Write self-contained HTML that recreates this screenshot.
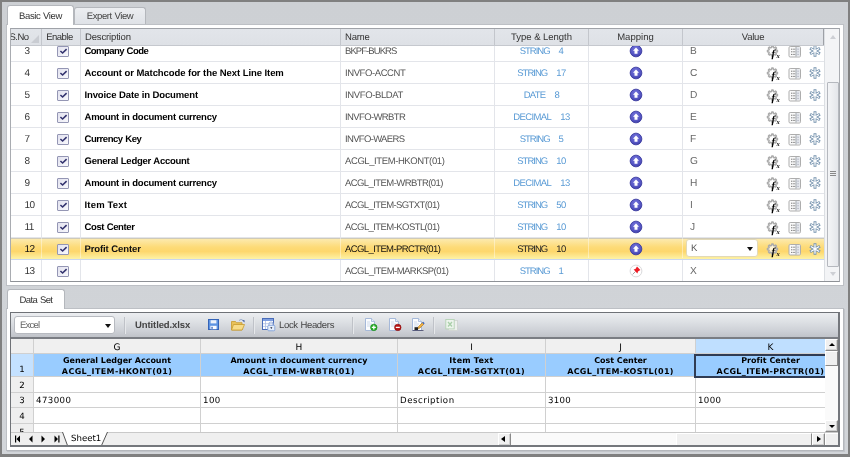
<!DOCTYPE html><html><head><meta charset="utf-8"><title>Mapper</title><style>*{box-sizing:border-box;margin:0;padding:0}
html,body{width:850px;height:457px;overflow:hidden}
body{background:#808080;font-family:"Liberation Sans",sans-serif;font-size:9.5px;color:#222;text-rendering:geometricPrecision}
#frame{position:absolute;left:0;top:0;width:850px;height:457px;border:2px solid #808080;border-bottom-width:3px;background:linear-gradient(#cdd0d4,#d2d5d9);overflow:hidden;will-change:transform}
.tab{position:absolute;border:1px solid #b4b7bc;border-bottom:none;border-radius:3px 3px 0 0;background:linear-gradient(#eceef1,#dfe2e7);color:#444;text-align:center;white-space:nowrap}
.tab.active{background:#fff;color:#333;z-index:3}
#tab-basic{left:5px;top:3px;width:67px;height:20px;line-height:21px;}
#tab-expert{left:72px;top:5px;width:72px;height:17px;line-height:17px;}
#tab-ds{left:5px;top:287px;width:58px;height:20px;line-height:22px}
.panel{position:absolute;background:#fff;border:1px solid #bdc0c5}
#panel-top{left:4px;top:22px;width:838px;height:262px}
#panel-bot{left:4px;top:306px;width:838px;height:143px;background:#fff;border-right-color:#b4b7bc;border-bottom-color:#b4b7bc;box-shadow:1px 1px 0 #c2c5ca}
.grid{position:absolute;left:3px;top:3px;width:830px;height:254px;border:1px solid #a9acb1;border-top-color:#9fa2a8;border-bottom-color:#8e9196;background:#fff;overflow:hidden}
.ghead{position:absolute;left:0;top:0;width:813px;height:17px;background:linear-gradient(#e2e5ea,#dee1e6);border-bottom:1px solid #c5c8ce;z-index:2}
.gh{position:absolute;top:0;height:16px;line-height:18.4px;border-right:1px solid #c3c6cc;color:#333;white-space:nowrap;overflow:hidden}
.gbody{position:absolute;left:0;top:17px;width:813px;height:236px;overflow:hidden}
.grow{position:absolute;left:0;width:813px;height:22px;border-bottom:1px solid #e3e5ea}
.gc{position:absolute;top:0;height:21px;line-height:23.6px;border-right:1px solid #e3e5ea;white-space:nowrap;overflow:hidden}
.c-sno{left:0;width:31px;text-align:left;padding-left:13.5px}
.c-en{left:31px;width:39px;text-align:center}
.c-desc{left:70px;width:260px;padding-left:3.5px}
.c-name{left:330px;width:154px;padding-left:4px}
.c-type{left:484px;width:94px;text-align:center}
.c-map{left:578px;width:94px;text-align:center}
.c-val{left:672px;width:141px}
.gh.c-sno{text-align:left;padding-left:0;text-indent:-1.5px}
.gh.c-en{text-indent:-3px}
.gh.c-val{text-align:center;border-right:1px solid #9da0a6;width:141px}
.gh.c-desc,.gh.c-name{padding-left:4px}
.gc.c-sno{color:#363636;font-size:10px}
.gc.c-desc{font-weight:bold;color:#000}
.gc.c-name{color:#555}
.gc.c-type{color:#5a9bd5}
.gc.c-type .ln{margin-left:9px}
.gc.c-val{color:#666;border-right:none}
.vt{position:absolute;left:7px;top:0;font-size:10.2px;color:#6a6a6a}
.sorttri{position:absolute;left:20px;top:6px;width:0;height:0;border-left:8px solid transparent;border-bottom:8px solid #c9ccd2}
.cb{display:inline-block;position:relative;top:3px;left:1.5px;width:12px;height:11px;border:1px solid #9496b4;background:linear-gradient(135deg,#e2e2ef,#f8f8fc);border-radius:1px}
.cb svg{position:absolute;left:1px;top:0}
.c-map svg{position:relative;top:4px}
.ic{position:absolute}
.i1{left:83px;top:4px}
.i2{left:105px;top:4.5px}
.i3{left:125px;top:4px}
.grow.sel{background:linear-gradient(#fceaae 0%,#fddb78 40%,#fdd76c 62%,#fdf2a6 100%);border-top:1px solid #cfcab8;border-bottom:1px solid #c9d6ee}
.grow.sel .gc{border-right-color:rgba(255,255,255,0.4);color:#111;height:20px;top:-1px}
.grow.sel .gc.c-type{color:#222}
.combo{position:absolute;left:3px;top:1px;width:72px;height:18px;background:#fff;border:1px solid #e2d9b8;border-radius:3px;line-height:17px}
.combo .ct{position:absolute;left:4px;top:0;color:#555}
.dd{position:absolute;width:0;height:0;border-left:3px solid transparent;border-right:3px solid transparent;border-top:4px solid #111}
.combo .dd{right:4px;top:7px}
.vscroll{position:absolute;left:813px;top:0;width:15px;height:252px;z-index:3;background:#f3f4f6;border-left:1px solid #dcdfe3}
.vscroll .thumb{position:absolute;left:2px;top:53px;width:12px;height:185px;border:1px solid #b5b8be;background:linear-gradient(90deg,#f4f5f7,#e4e6ea);border-radius:1px}
.vscroll .grip{position:absolute;left:2px;top:88px;width:6px;height:5px;border-top:1px solid #888;border-bottom:1px solid #888}
.vscroll .grip:after{content:"";position:absolute;left:0;top:1px;width:6px;height:1px;background:#888}
.arr{position:absolute;left:4.5px;width:0;height:0;border-left:3.5px solid transparent;border-right:3.5px solid transparent}
.arr.up{top:6px;border-bottom:4px solid #cdcfd4}
.arr.down{top:243px;border-top:4px solid #cdcfd4}
#inner{position:absolute;left:3px;top:3px;width:830px;height:135px;border:1px solid #6f7277;border-right:2px solid #74777c;border-bottom:2px solid #74777c;background:#fff}
#toolbar{position:absolute;left:0;top:0;width:827px;height:26px;background:linear-gradient(#eceef1,#dcdfe3 40%,#cdd0d6 75%,#c0c3c9);border-bottom:2px solid #7a7d83;color:#444}
#xlcombo{position:absolute;left:3px;top:3px;width:101px;height:18px;border:1px solid #b7bac0;border-radius:3px;background:#fff;line-height:17px;padding-left:5px;color:#666}
#xlcombo .dd{right:3px;top:7px}
.sep{position:absolute;top:4px;width:2px;height:17px;border-left:1px solid #bfc2c8;border-right:1px solid #e6e8eb}
#fname{position:absolute;left:124px;top:0;line-height:26px;font-weight:bold;color:#444}
#lockh{position:absolute;left:268px;top:0;line-height:26px;color:#444}
.tb{position:absolute}
#sheet{position:absolute;left:0;top:26px;width:827px;height:106px;background:#fff;font-family:"DejaVu Sans","Liberation Sans",sans-serif;font-size:8px;color:#000;overflow:hidden}
#sheetin{position:absolute;left:0;top:0;width:814px;height:93px;overflow:hidden;background:#d0d0d0}
.corner{position:absolute;left:0;top:0;width:22px;height:14px;background:#efefef}
.colh{position:absolute;top:0;height:14px;line-height:18.4px;background:#f0f0f0;text-align:center;font-size:9px;overflow:hidden}
.colh.selc{background:#bfdfff}
.hcell{position:absolute;top:15px;height:22px;padding-top:1px;background:#99ccff;text-align:center;font-weight:bold;line-height:11px;font-size:8px;white-space:nowrap;overflow:hidden}
.cell{position:absolute;background:#fff;line-height:17px;padding-left:2px;font-size:8.6px;white-space:nowrap}
.rowh{position:absolute;left:0;width:22px;background:#efefef;text-align:center;font-size:8.6px}
.rowh span{position:absolute;left:0;right:0;bottom:0;line-height:12px}
.rowh.r1{background:#c4e1ff}
#selbox{position:absolute;left:683px;top:15px;width:133px;height:24px;border:2px solid #303c54;border-right:none}
#svs{position:absolute;left:814px;top:0;width:13px;height:93px;background:#fafafa}
.sb{position:absolute;background:#f0f0f0;border:1px solid #fff;border-right-color:#8a8a8a;border-bottom-color:#8a8a8a;box-shadow:inset -1px -1px 0 #d0d0d0}
#svs .up{left:0;top:0;width:13px;height:12px}
#svs .sthumb{position:absolute;left:0;top:12px;width:13px;height:15px;background:#f0f0f0;border:1px solid #fff;border-right-color:#8a8a8a;border-bottom-color:#8a8a8a}
#svs .down{left:0;top:81px;width:13px;height:12px}
.sb:after{content:"";position:absolute;width:0;height:0}
.sb.up:after{left:3px;top:3px;border-left:3px solid transparent;border-right:3px solid transparent;border-bottom:3px solid #000}
.sb.down:after{left:3px;top:4px;border-left:3px solid transparent;border-right:3px solid transparent;border-top:3px solid #000}
.sb.left:after{left:2px;top:2px;border-top:3.5px solid transparent;border-bottom:3.5px solid transparent;border-right:4px solid #000}
.sb.right:after{left:4px;top:2px;border-top:3.5px solid transparent;border-bottom:3.5px solid transparent;border-left:4px solid #000}
#sbar{position:absolute;left:0;top:93px;width:827px;height:13px;background:#efefef;border-top:1px solid #c9c9c9}
.nav{position:absolute;left:4px;top:2px}
.stab{position:absolute;left:51px;top:-1px;width:50px;height:14px}
.stab svg{position:absolute;left:0;top:0}
.stab b{position:absolute;left:9px;top:1px;font-weight:normal;font-size:8.6px;line-height:13px}
#hs{position:absolute;left:487px;top:0;width:327px;height:13px;background:#fafafa}
#hs .left{left:0;top:0;width:13px;height:13px}
#hs .right{left:314px;top:0;width:13px;height:13px}
#hs .hthumb{position:absolute;left:178px;top:0;width:136px;height:13px;background:#f0f0f0;border:1px solid #fff;border-right-color:#8a8a8a;border-bottom-color:#8a8a8a}
.sz{position:absolute;left:814px;top:0;width:13px;height:13px;background:#f0f0f0;border-top:1px solid #fff;border-left:1px solid #fff}
.gc.c-sno,.gc.c-type .ln{letter-spacing:-0.5px}
</style></head><body>
<svg width="0" height="0" style="position:absolute">
<defs>
<radialGradient id="g-up" cx="0.45" cy="0.35" r="0.7"><stop offset="0" stop-color="#7474dc"/><stop offset="0.65" stop-color="#5656c4"/><stop offset="1" stop-color="#3a3aa0"/></radialGradient>
<symbol id="i-up" viewBox="0 0 14 14"><circle cx="7" cy="7" r="5.85" fill="url(#g-up)" stroke="#3c3ca2" stroke-width="0.9"/><path d="M7 3.6 L10 6.7 H8.5 V9.8 H5.5 V6.7 H4 Z" fill="#fff"/></symbol>
<symbol id="i-pin" viewBox="0 0 14 14"><circle cx="7" cy="7" r="5.9" fill="#fff" stroke="#dadadc" stroke-width="1"/><path d="M3.6 10.4 L6.6 7.4" stroke="#999" stroke-width="0.9"/><path d="M4.6 5.6 L8.4 9.4 L9 7.6 L11.4 6 L8 2.6 L6.4 5 Z" fill="#ee1c25"/></symbol>
<symbol id="i-fx" viewBox="0 0 16 16"><path d="M10.05 4.53 L10.05 5.87 L8.66 6.18 L8.34 6.95 L9.10 8.16 L8.16 9.10 L6.95 8.34 L6.18 8.66 L5.87 10.05 L4.53 10.05 L4.22 8.66 L3.45 8.34 L2.24 9.10 L1.30 8.16 L2.06 6.95 L1.74 6.18 L0.35 5.87 L0.35 4.53 L1.74 4.22 L2.06 3.45 L1.30 2.24 L2.24 1.30 L3.45 2.06 L4.22 1.74 L4.53 0.35 L5.87 0.35 L6.18 1.74 L6.95 2.06 L8.16 1.30 L9.10 2.24 L8.34 3.45 L8.66 4.22Z" transform="translate(1.1,1.7) scale(1.03)" fill="#fff" fill-opacity="0.7" stroke="#ababab" stroke-width="1.4" stroke-linejoin="round"/><text x="5.6" y="12.7" font-family="Liberation Serif,serif" font-style="italic" font-weight="bold" font-size="10.5" fill="#000">f</text><text x="10.4" y="14" font-family="Liberation Serif,serif" font-style="italic" font-weight="bold" font-size="6.5" fill="#000">x</text></symbol>
<symbol id="i-list" viewBox="0 0 14 14"><rect x="1" y="1.5" width="11.5" height="10.5" rx="1.2" fill="#fafafa" stroke="#adadad" stroke-width="1"/><rect x="8" y="2.2" width="3.8" height="9" fill="#e3e7ec"/><path d="M8 2v9.6" stroke="#9aa0a8" stroke-width="0.9"/><path d="M3.3 4.2h1M3.3 6.8h1M3.3 9.4h1" stroke="#444" stroke-width="1"/><path d="M5 4.2h2.3M5 6.8h2.3M5 9.4h2.3" stroke="#8a8a8a" stroke-width="0.9"/><path d="M9.3 4.2h1.6M9.3 6.8h1.6M9.3 9.4h1.6" stroke="#aab" stroke-width="0.8"/></symbol>
<symbol id="i-star" viewBox="0 0 14 14"><path d="M7.00 1.30L7.00 12.70M2.06 4.15L11.94 9.85M11.94 4.15L2.06 9.85" fill="none" stroke="#7693ae" stroke-width="2.9"/><path d="M7.00 2.15L7.00 11.85M2.80 4.58L11.20 9.42M11.20 4.58L2.80 9.42" fill="none" stroke="#fff" stroke-width="1.25"/></symbol>
<symbol id="i-save" viewBox="0 0 14 14"><rect x="1.5" y="1.5" width="10" height="10" fill="#5e94e2" stroke="#3564b8" stroke-width="1"/><rect x="3.6" y="2.2" width="5.8" height="3.2" fill="#eef3fb"/><rect x="3.4" y="7.8" width="6.2" height="3.4" fill="#fbfcff"/><rect x="4.4" y="8.8" width="1.3" height="2" fill="#3564b8"/></symbol>
<symbol id="i-open" viewBox="0 0 16 14"><path d="M1.5 12V3.5h4l1 1.2H12V12z" fill="#e9c25a" stroke="#c79a2e" stroke-width="0.8"/><path d="M1.5 12l2-5.5H14.5L12.2 12z" fill="#f7dc8a" stroke="#c79a2e" stroke-width="0.8"/><path d="M9 2.6c1.5-1.6 3.4-1.4 4.2.2" fill="none" stroke="#8aa2c8" stroke-width="0.9"/><path d="M12.2 2.2h2.3v2.3z" fill="#2c4c9c"/></symbol>
<symbol id="i-lock" viewBox="0 0 14 14"><rect x="0.5" y="0.5" width="11" height="11" fill="#fff" stroke="#4a6cb8" stroke-width="1"/><rect x="1" y="1" width="10" height="2" fill="#7f9fe0"/><path d="M3.5 3v8M1 5.7h10M1 8.4h10" stroke="#a9bce4" stroke-width="0.8"/><path d="M7 7.5V6a2 2 0 0 1 4 0v1.5" fill="none" stroke="#9fb4dc" stroke-width="1.2"/><rect x="5.8" y="7.3" width="7" height="5.5" rx="1" fill="#e4eefc" stroke="#7f9fd8" stroke-width="0.9"/><path d="M8.2 9.3h2.2l-1.1 1.6z" fill="#223"/></symbol>
<symbol id="i-page" viewBox="0 0 14 15"><path d="M1.5 0.5h6l3 3v9h-9z" fill="#fbfcfe" stroke="#9db2d6" stroke-width="0.9"/><path d="M7.5 0.5v3h3" fill="#e6ecf7" stroke="#9db2d6" stroke-width="0.8"/><path d="M3 4h3M3 6h5M3 8h4" stroke="#c4d0e6" stroke-width="0.8"/></symbol>
<symbol id="i-add" viewBox="0 0 14 15"><use href="#i-page"/><circle cx="9.8" cy="9.4" r="3.2" fill="#2bb02b" stroke="#178a17" stroke-width="0.7"/><path d="M9.8 7.4v4M7.8 9.4h4" stroke="#fff" stroke-width="1.3"/></symbol>
<symbol id="i-del" viewBox="0 0 14 15"><use href="#i-page"/><circle cx="9.8" cy="9.4" r="3.2" fill="#b81414" stroke="#8a0c0c" stroke-width="0.7"/><path d="M7.8 9.4h4" stroke="#fff" stroke-width="1.3"/></symbol>
<symbol id="i-edit" viewBox="0 0 14 15"><use href="#i-page"/><path d="M6.5 11l1-2.5 4-4 1.5 1.5-4 4z" fill="#f0b040" stroke="#a87420" stroke-width="0.6"/><path d="M11.2 4.8l1-1 1.5 1.5-1 1z" fill="#3a66c8"/><rect x="3.5" y="9.2" width="3.5" height="2.8" fill="#222"/><path d="M1.5 12.5h11" stroke="#446" stroke-width="0.8"/></symbol>
<symbol id="i-xl" viewBox="0 0 13 12"><rect x="3.5" y="1.5" width="9" height="10" fill="#eef0ee" stroke="#cfd4cf" stroke-width="0.8"/><rect x="0.8" y="0.5" width="8.4" height="9.4" fill="#edf4ed" stroke="#b4d2b4" stroke-width="0.9"/><path d="M3 3l4 4.5M7 3L3 7.5" stroke="#a9cfa9" stroke-width="1.3"/></symbol>
</defs></svg>

<div id="frame">
<div class="tab active" id="tab-basic"><span style="letter-spacing:-0.387px;word-spacing:0.387px">Basic View</span></div>
<div class="tab" id="tab-expert"><span style="letter-spacing:-0.391px;word-spacing:0.391px">Expert View</span></div>
<div class="panel" id="panel-top">
<div class="grid" id="grid">
<div class="ghead"><div class="gh c-sno"><span style="letter-spacing:-0.508px;word-spacing:0.508px">S.No</span><i class="sorttri"></i></div><div class="gh c-en"><span style="letter-spacing:-0.539px;word-spacing:0.539px">Enable</span></div><div class="gh c-desc"><span style="letter-spacing:-0.153px;word-spacing:0.153px">Description</span></div><div class="gh c-name"><span style="letter-spacing:-0.215px;word-spacing:0.215px">Name</span></div><div class="gh c-type"><span style="letter-spacing:-0.028px;word-spacing:0.028px">Type &amp; Length</span></div><div class="gh c-map"><span style="letter-spacing:0.041px;word-spacing:-0.041px">Mapping</span></div><div class="gh c-val"><span style="letter-spacing:-0.248px;word-spacing:0.248px">Value</span></div></div>
<div class="gbody">
<div class="grow" style="top:-6px">
<div class="gc c-sno">3</div>
<div class="gc c-en"><span class="cb"><svg width="9" height="8" viewBox="0 0 9 8"><path d="M1.4 4 L3.6 6 L7.6 2.2" fill="none" stroke="#32326e" stroke-width="1.6"/></svg></span></div>
<div class="gc c-desc"><span style="letter-spacing:-0.549px;word-spacing:0.549px">Company Code</span></div>
<div class="gc c-name"><span style="letter-spacing:-0.924px;word-spacing:0.924px">BKPF-BUKRS</span></div>
<div class="gc c-type"><span class="ty" style="letter-spacing:-0.998px;word-spacing:0.998px">STRING</span><span class="ln">4</span></div>
<div class="gc c-map"><svg width="14" height="14"><use href="#i-up"/></svg></div>
<div class="gc c-val"><span class="vt">B</span>
<svg class="ic i1" width="16" height="16"><use href="#i-fx"/></svg><svg class="ic i2" width="14" height="14"><use href="#i-list"/></svg><svg class="ic i3" width="14" height="14"><use href="#i-star"/></svg>
</div>
</div>
<div class="grow" style="top:16px">
<div class="gc c-sno">4</div>
<div class="gc c-en"><span class="cb"><svg width="9" height="8" viewBox="0 0 9 8"><path d="M1.4 4 L3.6 6 L7.6 2.2" fill="none" stroke="#32326e" stroke-width="1.6"/></svg></span></div>
<div class="gc c-desc"><span style="letter-spacing:-0.082px;word-spacing:0.082px">Account or Matchcode for the Next Line Item</span></div>
<div class="gc c-name"><span style="letter-spacing:-0.412px;word-spacing:0.412px">INVFO-ACCNT</span></div>
<div class="gc c-type"><span class="ty" style="letter-spacing:-0.998px;word-spacing:0.998px">STRING</span><span class="ln">17</span></div>
<div class="gc c-map"><svg width="14" height="14"><use href="#i-up"/></svg></div>
<div class="gc c-val"><span class="vt">C</span>
<svg class="ic i1" width="16" height="16"><use href="#i-fx"/></svg><svg class="ic i2" width="14" height="14"><use href="#i-list"/></svg><svg class="ic i3" width="14" height="14"><use href="#i-star"/></svg>
</div>
</div>
<div class="grow" style="top:38px">
<div class="gc c-sno">5</div>
<div class="gc c-en"><span class="cb"><svg width="9" height="8" viewBox="0 0 9 8"><path d="M1.4 4 L3.6 6 L7.6 2.2" fill="none" stroke="#32326e" stroke-width="1.6"/></svg></span></div>
<div class="gc c-desc"><span style="letter-spacing:-0.127px;word-spacing:0.127px">Invoice Date in Document</span></div>
<div class="gc c-name"><span style="letter-spacing:-0.371px;word-spacing:0.371px">INVFO-BLDAT</span></div>
<div class="gc c-type"><span class="ty" style="letter-spacing:-0.714px;word-spacing:0.714px">DATE</span><span class="ln">8</span></div>
<div class="gc c-map"><svg width="14" height="14"><use href="#i-up"/></svg></div>
<div class="gc c-val"><span class="vt">D</span>
<svg class="ic i1" width="16" height="16"><use href="#i-fx"/></svg><svg class="ic i2" width="14" height="14"><use href="#i-list"/></svg><svg class="ic i3" width="14" height="14"><use href="#i-star"/></svg>
</div>
</div>
<div class="grow" style="top:60px">
<div class="gc c-sno">6</div>
<div class="gc c-en"><span class="cb"><svg width="9" height="8" viewBox="0 0 9 8"><path d="M1.4 4 L3.6 6 L7.6 2.2" fill="none" stroke="#32326e" stroke-width="1.6"/></svg></span></div>
<div class="gc c-desc"><span style="letter-spacing:-0.229px;word-spacing:0.229px">Amount in document currency</span></div>
<div class="gc c-name"><span style="letter-spacing:-0.623px;word-spacing:0.623px">INVFO-WRBTR</span></div>
<div class="gc c-type"><span class="ty" style="letter-spacing:-0.622px;word-spacing:0.622px">DECIMAL</span><span class="ln">13</span></div>
<div class="gc c-map"><svg width="14" height="14"><use href="#i-up"/></svg></div>
<div class="gc c-val"><span class="vt">E</span>
<svg class="ic i1" width="16" height="16"><use href="#i-fx"/></svg><svg class="ic i2" width="14" height="14"><use href="#i-list"/></svg><svg class="ic i3" width="14" height="14"><use href="#i-star"/></svg>
</div>
</div>
<div class="grow" style="top:82px">
<div class="gc c-sno">7</div>
<div class="gc c-en"><span class="cb"><svg width="9" height="8" viewBox="0 0 9 8"><path d="M1.4 4 L3.6 6 L7.6 2.2" fill="none" stroke="#32326e" stroke-width="1.6"/></svg></span></div>
<div class="gc c-desc"><span style="letter-spacing:-0.438px;word-spacing:0.438px">Currency Key</span></div>
<div class="gc c-name"><span style="letter-spacing:-0.669px;word-spacing:0.669px">INVFO-WAERS</span></div>
<div class="gc c-type"><span class="ty" style="letter-spacing:-0.998px;word-spacing:0.998px">STRING</span><span class="ln">5</span></div>
<div class="gc c-map"><svg width="14" height="14"><use href="#i-up"/></svg></div>
<div class="gc c-val"><span class="vt">F</span>
<svg class="ic i1" width="16" height="16"><use href="#i-fx"/></svg><svg class="ic i2" width="14" height="14"><use href="#i-list"/></svg><svg class="ic i3" width="14" height="14"><use href="#i-star"/></svg>
</div>
</div>
<div class="grow" style="top:104px">
<div class="gc c-sno">8</div>
<div class="gc c-en"><span class="cb"><svg width="9" height="8" viewBox="0 0 9 8"><path d="M1.4 4 L3.6 6 L7.6 2.2" fill="none" stroke="#32326e" stroke-width="1.6"/></svg></span></div>
<div class="gc c-desc"><span style="letter-spacing:-0.247px;word-spacing:0.247px">General Ledger Account</span></div>
<div class="gc c-name"><span style="letter-spacing:-0.409px;word-spacing:0.409px">ACGL_ITEM-HKONT(01)</span></div>
<div class="gc c-type"><span class="ty" style="letter-spacing:-0.998px;word-spacing:0.998px">STRING</span><span class="ln">10</span></div>
<div class="gc c-map"><svg width="14" height="14"><use href="#i-up"/></svg></div>
<div class="gc c-val"><span class="vt">G</span>
<svg class="ic i1" width="16" height="16"><use href="#i-fx"/></svg><svg class="ic i2" width="14" height="14"><use href="#i-list"/></svg><svg class="ic i3" width="14" height="14"><use href="#i-star"/></svg>
</div>
</div>
<div class="grow" style="top:126px">
<div class="gc c-sno">9</div>
<div class="gc c-en"><span class="cb"><svg width="9" height="8" viewBox="0 0 9 8"><path d="M1.4 4 L3.6 6 L7.6 2.2" fill="none" stroke="#32326e" stroke-width="1.6"/></svg></span></div>
<div class="gc c-desc"><span style="letter-spacing:-0.229px;word-spacing:0.229px">Amount in document currency</span></div>
<div class="gc c-name"><span style="letter-spacing:-0.574px;word-spacing:0.574px">ACGL_ITEM-WRBTR(01)</span></div>
<div class="gc c-type"><span class="ty" style="letter-spacing:-0.622px;word-spacing:0.622px">DECIMAL</span><span class="ln">13</span></div>
<div class="gc c-map"><svg width="14" height="14"><use href="#i-up"/></svg></div>
<div class="gc c-val"><span class="vt">H</span>
<svg class="ic i1" width="16" height="16"><use href="#i-fx"/></svg><svg class="ic i2" width="14" height="14"><use href="#i-list"/></svg><svg class="ic i3" width="14" height="14"><use href="#i-star"/></svg>
</div>
</div>
<div class="grow" style="top:148px">
<div class="gc c-sno">10</div>
<div class="gc c-en"><span class="cb"><svg width="9" height="8" viewBox="0 0 9 8"><path d="M1.4 4 L3.6 6 L7.6 2.2" fill="none" stroke="#32326e" stroke-width="1.6"/></svg></span></div>
<div class="gc c-desc"><span style="letter-spacing:0.198px;word-spacing:-0.198px">Item Text</span></div>
<div class="gc c-name"><span style="letter-spacing:-0.599px;word-spacing:0.599px">ACGL_ITEM-SGTXT(01)</span></div>
<div class="gc c-type"><span class="ty" style="letter-spacing:-0.998px;word-spacing:0.998px">STRING</span><span class="ln">50</span></div>
<div class="gc c-map"><svg width="14" height="14"><use href="#i-up"/></svg></div>
<div class="gc c-val"><span class="vt">I</span>
<svg class="ic i1" width="16" height="16"><use href="#i-fx"/></svg><svg class="ic i2" width="14" height="14"><use href="#i-list"/></svg><svg class="ic i3" width="14" height="14"><use href="#i-star"/></svg>
</div>
</div>
<div class="grow" style="top:170px">
<div class="gc c-sno">11</div>
<div class="gc c-en"><span class="cb"><svg width="9" height="8" viewBox="0 0 9 8"><path d="M1.4 4 L3.6 6 L7.6 2.2" fill="none" stroke="#32326e" stroke-width="1.6"/></svg></span></div>
<div class="gc c-desc"><span style="letter-spacing:-0.383px;word-spacing:0.383px">Cost Center</span></div>
<div class="gc c-name"><span style="letter-spacing:-0.57px;word-spacing:0.57px">ACGL_ITEM-KOSTL(01)</span></div>
<div class="gc c-type"><span class="ty" style="letter-spacing:-0.998px;word-spacing:0.998px">STRING</span><span class="ln">10</span></div>
<div class="gc c-map"><svg width="14" height="14"><use href="#i-up"/></svg></div>
<div class="gc c-val"><span class="vt">J</span>
<svg class="ic i1" width="16" height="16"><use href="#i-fx"/></svg><svg class="ic i2" width="14" height="14"><use href="#i-list"/></svg><svg class="ic i3" width="14" height="14"><use href="#i-star"/></svg>
</div>
</div>
<div class="grow sel" style="top:192px">
<div class="gc c-sno">12</div>
<div class="gc c-en"><span class="cb"><svg width="9" height="8" viewBox="0 0 9 8"><path d="M1.4 4 L3.6 6 L7.6 2.2" fill="none" stroke="#32326e" stroke-width="1.6"/></svg></span></div>
<div class="gc c-desc"><span style="letter-spacing:-0.104px;word-spacing:0.104px">Profit Center</span></div>
<div class="gc c-name"><span style="letter-spacing:-0.601px;word-spacing:0.601px">ACGL_ITEM-PRCTR(01)</span></div>
<div class="gc c-type"><span class="ty" style="letter-spacing:-0.998px;word-spacing:0.998px">STRING</span><span class="ln">10</span></div>
<div class="gc c-map"><svg width="14" height="14"><use href="#i-up"/></svg></div>
<div class="gc c-val"><span class="combo"><span class="ct">K</span><i class="dd"></i></span>
<svg class="ic i1" width="16" height="16"><use href="#i-fx"/></svg><svg class="ic i2" width="14" height="14"><use href="#i-list"/></svg><svg class="ic i3" width="14" height="14"><use href="#i-star"/></svg>
</div>
</div>
<div class="grow" style="top:214px">
<div class="gc c-sno">13</div>
<div class="gc c-en"><span class="cb"><svg width="9" height="8" viewBox="0 0 9 8"><path d="M1.4 4 L3.6 6 L7.6 2.2" fill="none" stroke="#32326e" stroke-width="1.6"/></svg></span></div>
<div class="gc c-desc"><span></span></div>
<div class="gc c-name"><span style="letter-spacing:-0.538px;word-spacing:0.538px">ACGL_ITEM-MARKSP(01)</span></div>
<div class="gc c-type"><span class="ty" style="letter-spacing:-0.998px;word-spacing:0.998px">STRING</span><span class="ln">1</span></div>
<div class="gc c-map"><svg width="14" height="14"><use href="#i-pin"/></svg></div>
<div class="gc c-val"><span class="vt">X</span>
</div>
</div>
</div>
<div class="vscroll"><i class="arr up"></i><div class="thumb"><i class="grip"></i></div><i class="arr down"></i></div>
</div>
</div>
<div class="tab active" id="tab-ds"><span style="letter-spacing:-0.595px;word-spacing:0.595px">Data Set</span></div>
<div class="panel" id="panel-bot">
<div id="inner">
<div id="toolbar"><div id="xlcombo"><span style="letter-spacing:-0.809px;word-spacing:0.809px">Excel</span><i class="dd"></i></div><i class="sep" style="left:113px"></i><span id="fname"><span style="letter-spacing:-0.1px;word-spacing:0.1px">Untitled.xlsx</span></span><svg class="tb" style="left:196px;top:5px" width="14" height="14"><use href="#i-save"/></svg><svg class="tb" style="left:219px;top:5px" width="16" height="14"><use href="#i-open"/></svg><i class="sep" style="left:242px"></i><svg class="tb" style="left:251px;top:5px" width="14" height="14"><use href="#i-lock"/></svg><span id="lockh"><span style="letter-spacing:-0.323px;word-spacing:0.323px">Lock Headers</span></span><i class="sep" style="left:341px"></i><svg class="tb" style="left:353px;top:5px" width="14" height="15"><use href="#i-add"/></svg><svg class="tb" style="left:377px;top:5px" width="14" height="15"><use href="#i-del"/></svg><svg class="tb" style="left:400px;top:5px" width="14" height="15"><use href="#i-edit"/></svg><i class="sep" style="left:422px"></i><svg class="tb" style="left:434px;top:6px" width="13" height="12"><use href="#i-xl"/></svg></div>
<div id="sheet">
<div id="sheetin">
<div class="corner"></div>
<div class="colh" style="left:23px;width:166px">G</div>
<div class="hcell" style="left:23px;width:166px"><span style="letter-spacing:-0.027px;word-spacing:0.027px">General Ledger Account</span><br><span style="letter-spacing:0.398px;word-spacing:-0.398px">ACGL_ITEM-HKONT(01)</span></div>
<div class="cell" style="left:23px;width:166px;top:38px;height:15px"><span></span></div>
<div class="cell" style="left:23px;width:166px;top:54px;height:14px"><span style="letter-spacing:0.438px;word-spacing:-0.438px">473000</span></div>
<div class="cell" style="left:23px;width:166px;top:69px;height:15px"><span></span></div>
<div class="cell" style="left:23px;width:166px;top:85px;height:15px"><span></span></div>
<div class="colh" style="left:190px;width:196px">H</div>
<div class="hcell" style="left:190px;width:196px"><span style="letter-spacing:0.035px;word-spacing:-0.035px">Amount in document currency</span><br><span style="letter-spacing:0.422px;word-spacing:-0.422px">ACGL_ITEM-WRBTR(01)</span></div>
<div class="cell" style="left:190px;width:196px;top:38px;height:15px"><span></span></div>
<div class="cell" style="left:190px;width:196px;top:54px;height:14px"><span style="letter-spacing:0.447px;word-spacing:-0.447px">100</span></div>
<div class="cell" style="left:190px;width:196px;top:69px;height:15px"><span></span></div>
<div class="cell" style="left:190px;width:196px;top:85px;height:15px"><span></span></div>
<div class="colh" style="left:387px;width:147px">I</div>
<div class="hcell" style="left:387px;width:147px"><span style="letter-spacing:0.263px;word-spacing:-0.263px">Item Text</span><br><span style="letter-spacing:0.349px;word-spacing:-0.349px">ACGL_ITEM-SGTXT(01)</span></div>
<div class="cell" style="left:387px;width:147px;top:38px;height:15px"><span></span></div>
<div class="cell" style="left:387px;width:147px;top:54px;height:14px"><span style="letter-spacing:0.515px;word-spacing:-0.515px">Description</span></div>
<div class="cell" style="left:387px;width:147px;top:69px;height:15px"><span></span></div>
<div class="cell" style="left:387px;width:147px;top:85px;height:15px"><span></span></div>
<div class="colh" style="left:535px;width:149px">J</div>
<div class="hcell" style="left:535px;width:149px"><span style="letter-spacing:-0.049px;word-spacing:0.049px">Cost Center</span><br><span style="letter-spacing:0.338px;word-spacing:-0.338px">ACGL_ITEM-KOSTL(01)</span></div>
<div class="cell" style="left:535px;width:149px;top:38px;height:15px"><span></span></div>
<div class="cell" style="left:535px;width:149px;top:54px;height:14px"><span style="letter-spacing:0.308px;word-spacing:-0.308px">3100</span></div>
<div class="cell" style="left:535px;width:149px;top:69px;height:15px"><span></span></div>
<div class="cell" style="left:535px;width:149px;top:85px;height:15px"><span></span></div>
<div class="colh selc" style="left:685px;width:149px">K</div>
<div class="hcell" style="left:685px;width:149px"><span style="letter-spacing:0.034px;word-spacing:-0.034px">Profit Center</span><br><span style="letter-spacing:0.363px;word-spacing:-0.363px">ACGL_ITEM-PRCTR(01)</span></div>
<div class="cell" style="left:685px;width:149px;top:38px;height:15px"><span></span></div>
<div class="cell" style="left:685px;width:149px;top:54px;height:14px"><span style="letter-spacing:0.375px;word-spacing:-0.375px">1000</span></div>
<div class="cell" style="left:685px;width:149px;top:69px;height:15px"><span></span></div>
<div class="cell" style="left:685px;width:149px;top:85px;height:15px"><span></span></div>
<div class="rowh r1" style="top:15px;height:22px"><span>1</span></div>
<div class="rowh" style="top:38px;height:15px"><span>2</span></div>
<div class="rowh" style="top:54px;height:14px"><span>3</span></div>
<div class="rowh" style="top:69px;height:15px"><span>4</span></div>
<div class="rowh" style="top:85px;height:15px"><span>5</span></div>
<div id="selbox"></div>
</div>
<div id="svs"><i class="sb up"></i><i class="sthumb"></i><i class="sb down"></i></div>
<div id="sbar"><span class="nav"><svg width="46" height="9" viewBox="0 0 46 9"><path d="M0 0.5h1.2v7H0zM5 0.5L1.5 4l3.5 3.5zM17.5 0.5L14 4l3.5 3.5zM26.5 0.5L30 4l-3.5 3.5zM39.5 0.5L43 4l-3.5 3.5zM43.3 0.5h1.2v7h-1.2z" fill="#000"/></svg></span><span class="stab"><svg width="50" height="14" viewBox="0 0 50 14"><path d="M0.5 0 L5.5 13.5 L39.5 13.5 L45.5 0" fill="#fff" stroke="#555" stroke-width="1"/></svg><b>Sheet1</b></span><div id="hs"><i class="sb left"></i><i class="hthumb"></i><i class="sb right"></i></div><div class="sz"></div></div>
</div>
</div>
</div>
</div></body></html>
